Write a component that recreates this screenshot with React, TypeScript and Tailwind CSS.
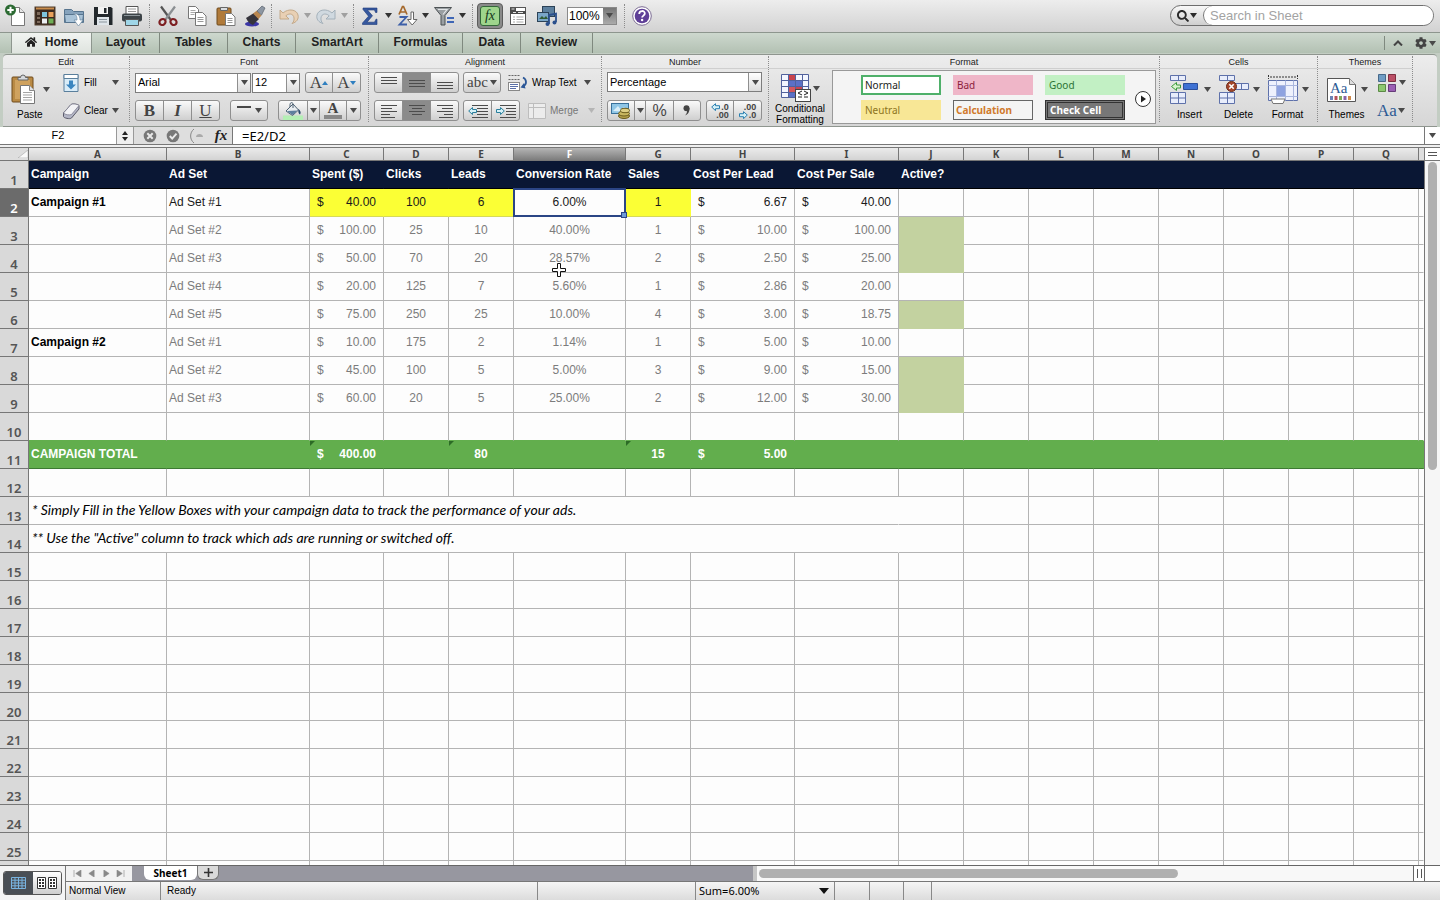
import React from "react";
import clsx from "clsx";
import { FaHome, FaCog, FaSearch } from "react-icons/fa";

/* ---------- small shared pieces ---------- */

function Caret({ className = "text-[#4a4a4a]" }: { className?: string }) {
  return (
    <svg viewBox="0 0 7 5" className={clsx("h-[5px] w-[7px] shrink-0", className)} aria-hidden="true">
      <path d="M0 0h7L3.5 5z" fill="currentColor" />
    </svg>
  );
}

function CaretButton({ label, dim }: { label: string; dim?: boolean }) {
  return (
    <button aria-label={label} className="flex h-5 w-2 shrink-0 items-center justify-center">
      <Caret className={dim ? "text-[#a0a0a0]" : "text-[#333]"} />
    </button>
  );
}

function Dots({ className }: { className?: string }) {
  return <span className={clsx("w-0 shrink-0 border-l border-dotted border-[#8c8c8c]", className)} />;
}

function ToolButton({ label, children }: { label: string; children: React.ReactNode }) {
  return (
    <button aria-label={label} className="flex h-7 w-[29px] shrink-0 items-center justify-center">
      <svg viewBox="0 0 24 24" className="h-6 w-6" fill="none" aria-hidden="true">
        {children}
      </svg>
    </button>
  );
}

const page = (
  <>
    <path d="M7.500 3.500h8l5 5v13h-13z" fill="#fff" stroke="#777" />
    <path d="M15.500 3.500v5h5" fill="#e6e6e6" stroke="#777" />
  </>
);

/* ---------- top toolbar ---------- */

function Toolbar() {
  return (
    <div className="flex h-8 shrink-0 items-center bg-linear-to-b from-[#ededed] to-[#d2d2d2] pb-px pl-px">
      <ToolButton label="New">
        {page}
        <circle cx="6.500" cy="6" r="5.500" fill="#2c6b33" />
        <path d="M6.500 2.800v6.400M3.300 6h6.400" stroke="#fff" strokeWidth="2" />
      </ToolButton>
      <ToolButton label="Templates">
        <rect x="2" y="3" width="20" height="18" fill="#3a2a20" stroke="#55402f" />
        <path d="M3 4.500h18" stroke="#c98c4c" strokeWidth="2" />
        <path d="M4 8h3v3H4zM4 13h3v2H4zM4 17h3v2H4z" fill="#7d6a5b" />
        <path d="M9 8h5v5H9z" fill="#7cc4de" />
        <path d="M15.500 8h5v5h-5z" fill="#e9a15b" />
        <path d="M9 14.500h5v5H9z" fill="#eceff2" />
        <path d="M15.500 14.500h5v5h-5z" fill="#6fae55" />
      </ToolButton>
      <ToolButton label="Open">
        <path d="M2.500 5.500h7l2 2h10v11h-19z" fill="#86a3bd" stroke="#57748e" />
        <path d="M2.500 10.500h19l-1 8h-17z" fill="#a9c3d8" stroke="#57748e" />
        <path d="M11 10c3 0 4 2 4 6h-3l4.500 6 4.500-6h-3c0-5-3-7-7-6z" fill="#fff" stroke="#6f8ba3" strokeWidth=".7" />
      </ToolButton>
      <ToolButton label="Save">
        <path d="M3 3h17l1.500 1.500V21H3z" fill="#23282c" />
        <path d="M7 3h10v7H7z" fill="#f3f3f3" />
        <path d="M13 4h2.500v5H13z" fill="#23282c" />
        <path d="M6 13h12v8H6z" fill="#dfe5ea" />
        <path d="M8 15.500h8M8 18h8" stroke="#8a949c" />
      </ToolButton>
      <ToolButton label="Print">
        <path d="M6 2.500h12v8H6z" fill="#fff" stroke="#555" />
        <path d="M8 5h8M8 7.500h8" stroke="#999" />
        <rect x="2" y="9.500" width="20" height="8" rx="2" fill="#3c4347" />
        <path d="M4 11.500h16" stroke="#8b9499" />
        <path d="M5.500 15.500h13v6h-13z" fill="#9fd6e8" stroke="#555" />
      </ToolButton>
      <Dots className="mx-[3px] h-6" />
      <ToolButton label="Cut">
        <path d="M5 2.500l9.500 13" stroke="#555" strokeWidth="2.200" />
        <path d="M19 2.500l-9.500 13" stroke="#8b8f92" strokeWidth="2.200" />
        <ellipse cx="6.500" cy="18" rx="3.200" ry="2.800" transform="rotate(-35 6.500 18)" stroke="#7d1f22" strokeWidth="2.200" />
        <ellipse cx="17.500" cy="18" rx="3.200" ry="2.800" transform="rotate(35 17.500 18)" stroke="#7d1f22" strokeWidth="2.200" />
      </ToolButton>
      <ToolButton label="Copy">
        <path d="M3.500 2.500h7l3 3v9h-10z" fill="#fff" stroke="#777" />
        <path d="M5.500 6.500h5M5.500 8.500h6M5.500 10.500h4" stroke="#aaa" />
        <path d="M10.500 8.500h7l3.500 3.500v9.500H10.500z" fill="#fff" stroke="#777" />
        <path d="M12.500 13.500h6M12.500 15.500h6M12.500 17.500h6" stroke="#999" />
      </ToolButton>
      <ToolButton label="Paste">
        <rect x="3" y="4" width="14" height="17" rx="1" fill="#b07a3a" stroke="#6f4a1c" />
        <path d="M6.500 3.500h7v3h-7z" fill="#d9dcde" stroke="#666" />
        <path d="M11.500 9.500h6l3.500 3.500v8.500h-9.500z" fill="#fff" stroke="#777" />
        <path d="M13.500 14.500h5M13.500 16.500h5M13.500 18.500h5" stroke="#999" />
      </ToolButton>
      <ToolButton label="Format painter">
        <ellipse cx="9" cy="20" rx="7" ry="2.500" fill="#3b35a5" />
        <path d="M3 14l8-5 5 6-6 6c-3-1-5-3-7-7z" fill="#35343c" />
        <path d="M10 9.500l4-3 4.500 5-3 3.500z" fill="#b98750" />
        <path d="M14 7l5-5 3 2-3.500 7z" fill="#8d97a3" stroke="#59626c" strokeWidth=".7" />
      </ToolButton>
      <Dots className="mx-[2px] h-6" />
      <ToolButton label="Undo">
        <path d="M3 6v9h9l-3.200-3.200c4-3.600 9-1.600 8.200 4.200-.2 1.600-1 2.700-2 3.500 4.500-1.200 7-4.500 6-8.500C19.800 5.500 11.500 4 6 9z" fill="#e9d0b4" stroke="#bfa583" strokeWidth=".9" />
      </ToolButton>
      <CaretButton label="Undo list" dim />
      <ToolButton label="Redo">
        <path d="M21 6v9h-9l3.200-3.200c-4-3.600-9-1.600-8.200 4.200.2 1.600 1 2.700 2 3.500-4.500-1.200-7-4.500-6-8.500C4.200 5.500 12.500 4 18 9z" fill="#d0d9e0" stroke="#9eabb5" strokeWidth=".9" />
      </ToolButton>
      <CaretButton label="Redo list" dim />
      <Dots className="mr-px ml-[5px] h-6" />
      <ToolButton label="AutoSum">
        <path d="M5 4h14v4.500h-1.500L16.500 6H9.500l5 5.800-5.500 6.400h7.500l1.500-3H19V20.500H4.500V19l6-6.800L5 5.500z" fill="#36589f" stroke="#1f3b78" strokeWidth=".6" />
      </ToolButton>
      <CaretButton label="AutoSum list" />
      <ToolButton label="Sort">
        <path d="M4 10.500L7.500 2.500h1L12 10.500M5.500 8h5" stroke="#a5692c" strokeWidth="1.700" />
        <path d="M4.500 13h7l-7 7.500h7.500" stroke="#3c5fa8" strokeWidth="1.800" />
        <path d="M16 8h2.500v7.500H22L17.200 21 12.500 15.500H16z" fill="#fff" stroke="#666" />
      </ToolButton>
      <CaretButton label="Sort list" />
      <ToolButton label="Filter">
        <path d="M2.500 3.500h17l-6.500 8v9.500h-4v-9.500z" fill="#9a9fa2" stroke="#4d5255" />
        <path d="M6 5.500h9l-4 5" stroke="#e3e6e8" strokeWidth="1.200" />
        <path d="M15 14h7M15 18h7" stroke="#3f66b5" strokeWidth="2" />
      </ToolButton>
      <CaretButton label="Filter list" />
      <Dots className="mr-1 ml-[6px] h-6" />
      <button
        aria-label="Formula builder"
        className="flex h-[26px] w-[26px] shrink-0 items-center justify-center rounded-[4px] border border-[#5c5c5c] bg-[#8a8a8a]"
      >
        <span className="flex h-5 w-5 items-center justify-center rounded-[3px] border border-[#34683a] bg-[#9ed58c] font-['Liberation_Serif',serif] text-[14px] leading-none text-[#14361a] italic">
          fx
        </span>
      </button>
      <ToolButton label="Toolbox">
        <rect x="4.500" y="3.500" width="15" height="17" fill="#fff" stroke="#555" />
        <path d="M4 4h6v3h10v3H4z" fill="#4b4b4b" />
        <path d="M5.500 5h3M7 8.500h3M12 8.500h5" stroke="#e5e5e5" />
        <path d="M7 13h2M10.500 13h7M7 15.500h2M10.500 15.500h7M7 18h2M10.500 18h7" stroke="#aaa" />
      </ToolButton>
      <ToolButton label="Media browser">
        <rect x="7.500" y="2.500" width="12" height="10" fill="#5c7f9e" stroke="#2c4257" />
        <rect x="2.500" y="8.500" width="11" height="9" fill="#7aa6c8" stroke="#2c4257" />
        <path d="M4 15l3-3 2 2 2-2 2 3z" fill="#315c35" />
        <path d="M14 20v-9l7-1.500V18" stroke="#2a4f8c" strokeWidth="1.800" />
        <circle cx="12.500" cy="20" r="2" fill="#2a4f8c" />
        <circle cx="19.500" cy="18.500" r="2" fill="#2a4f8c" />
      </ToolButton>
      <div className="relative ml-[6px] shrink-0">
        <select
          aria-label="Zoom"
          defaultValue="100%"
          className="block h-[18px] w-[50px] appearance-none border border-[#8a8a8a] bg-white pl-px text-[12px] leading-none"
        >
          <option>100%</option>
        </select>
        <span className="pointer-events-none absolute inset-y-px right-px flex w-[13px] items-center justify-center bg-linear-to-b from-[#777] to-[#ababab]">
          <Caret />
        </span>
      </div>
      <Dots className="mr-[4px] ml-[7px] h-6" />
      <button aria-label="Help" className="flex h-7 w-[25px] items-center justify-center">
        <svg viewBox="0 0 20 20" className="h-5 w-5" aria-hidden="true">
          <circle cx="10" cy="10" r="9.300" fill="#fff" stroke="#7b6b93" />
          <circle cx="10" cy="10" r="7.300" fill="#5f3f97" />
          <path d="M7.200 8c0-4 5.800-3.800 5.600-.4 0 2-2.700 2-2.700 4" fill="none" stroke="#fff" strokeWidth="1.800" />
          <circle cx="10.100" cy="14" r="1.200" fill="#fff" />
        </svg>
      </button>
      <div className="mr-[6px] ml-auto flex h-[21px] w-[264px] items-center rounded-full border border-[#6e6e6e] bg-linear-to-b from-[#f8f8f8] to-[#cfcfcf]">
        <button aria-label="Search options" className="flex w-8 items-center justify-center gap-px text-[#2b2b2b]">
          <FaSearch className="h-3 w-3" />
          <Caret className="text-[#2b2b2b]" />
        </button>
        <input
          aria-label="Search in Sheet"
          placeholder="Search in Sheet"
          className="h-full min-w-0 flex-1 rounded-full border-l border-[#777] bg-white pl-[6px] text-[13px] placeholder:text-[#a3a3a3]"
        />
      </div>
    </div>
  );
}

/* ---------- ribbon tabs ---------- */

const tabs = [
  { name: "Layout", width: "w-[68px]" },
  { name: "Tables", width: "w-[68px]" },
  { name: "Charts", width: "w-[68px]" },
  { name: "SmartArt", width: "w-[83px]" },
  { name: "Formulas", width: "w-[84px]" },
  { name: "Data", width: "w-[58px]" },
  { name: "Review", width: "w-[72px]" },
];

function Tabs() {
  return (
    <nav className="flex h-[21px] shrink-0 items-stretch border-t border-[#8d968e] bg-linear-to-b from-[#cdd8ce] to-[#b3c1b3] pl-[11px] text-[12px] leading-4 font-bold text-[#222]">
      <button className="flex w-[81px] items-center justify-center gap-2 border-x border-[#8d968e] bg-linear-to-b from-[#f1f4f1] to-[#dfe4df] pb-[2px]">
        <FaHome className="h-3 w-3" />
        Home
      </button>
      {tabs.map((t) => (
        <button key={t.name} className={clsx("border-r border-[#7f897f] pb-[2px]", t.width)}>
          {t.name}
        </button>
      ))}
      <div className="my-[3px] ml-auto flex items-center border-l border-[#7f897f] pr-1 pl-2 text-[#444]">
        <button aria-label="Collapse ribbon" className="mr-[6px] flex w-4 justify-start">
          <svg viewBox="0 0 10 6" className="h-[6px] w-[10px]" aria-hidden="true">
            <path d="M1 5.500L5 1.500l4 4" fill="none" stroke="currentColor" strokeWidth="2" />
          </svg>
        </button>
        <button aria-label="Ribbon settings" className="flex items-center gap-[2px]">
          <FaCog className="h-3 w-3" />
          <Caret />
        </button>
      </div>
    </nav>
  );
}

/* ---------- ribbon ---------- */

function Group({ title, className, children }: { title: string; className: string; children: React.ReactNode }) {
  return (
    <section className={clsx("flex shrink-0 flex-col border-r border-dotted border-[#8c8c8c]", className)}>
      <h2 className="mb-[3px] h-[13px] border-b border-[#cfcfcf] text-center text-[9px] leading-3 text-[#1a1a1a]">{title}</h2>
      {children}
    </section>
  );
}

const strip =
  "flex h-[21px] shrink-0 items-stretch divide-x divide-[#8f8f8f] overflow-hidden rounded-[3px] border border-[#8f8f8f] bg-linear-to-b from-[#fafafa] to-[#cfcfcf] text-[#444]";

function Btn({ label, className, children }: { label: string; className: string; children: React.ReactNode }) {
  return (
    <button aria-label={label} className={clsx("flex items-center justify-center", className)}>
      {children}
    </button>
  );
}

function Lines({ d }: { d: string }) {
  return (
    <svg viewBox="0 0 18 16" className="h-4 w-[18px]" aria-hidden="true">
      <path d={d} stroke="#4c4c4c" fill="none" />
    </svg>
  );
}

function Picker({ label, value, className }: { label: string; value: string; className: string }) {
  return (
    <div className={clsx("relative shrink-0", className)}>
      <select
        aria-label={label}
        defaultValue={value}
        className="block h-5 w-full appearance-none border border-[#7d7d7d] bg-white pl-[2px] text-[11px] leading-none"
      >
        <option>{value}</option>
      </select>
      <span className="pointer-events-none absolute inset-y-px right-px flex w-[13px] items-center justify-center border-l border-[#8f8f8f] bg-linear-to-b from-white to-[#dcdcdc]">
        <Caret />
      </span>
    </div>
  );
}

function EditGroup() {
  return (
    <Group title="Edit" className="w-[127px]">
      <div className="flex pl-2">
        <div className="flex w-12 flex-col">
          <button className="flex flex-col items-start text-[10px]">
            <span className="flex items-center gap-[6px]">
              <svg viewBox="0 0 26 34" className="h-[34px] w-[26px]" aria-hidden="true">
                <rect x="1" y="5" width="21" height="25" rx="1" fill="#b98a45" stroke="#6f4a1c" />
                <rect x="4" y="8" width="15" height="19" fill="#cfa25f" />
                <path d="M7 8V5.500h2.500a2.500 2.500 0 0 1 5 0H17V8z" fill="#d6dade" stroke="#666" />
                <path d="M9.500 13.500h9l5 5V31.500h-14z" fill="#fff" stroke="#777" />
                <path d="M18.500 13.500v5h5" fill="#e2e2e2" stroke="#888" />
                <path d="M12 20.500h9M12 23h9M12 25.500h9M12 28h9" stroke="#a5a5a5" />
              </svg>
              <Caret />
            </span>
            <span className="mt-[3px] pl-[6px] leading-3">Paste</span>
          </button>
        </div>
        <div className="flex flex-col gap-[7px] pl-[3px] text-[10px]">
          <button className="flex h-[21px] items-center">
            <svg viewBox="0 0 18 18" className="mr-1 h-[18px] w-[18px]" aria-hidden="true">
              <path d="M2 .5h14v17H2z" fill="#d9ecf8" stroke="#5a7f9c" />
              <path d="M2 .5h14v4H2z" fill="#fff" stroke="#5a7f9c" />
              <path d="M7 6.500h4v4h3L9 15.500 4 10.500h3z" fill="#3b86c0" />
            </svg>
            <span className="w-7 text-left">Fill</span>
            <Caret />
          </button>
          <button className="flex h-[21px] items-center">
            <svg viewBox="0 0 18 18" className="mr-1 h-[18px] w-[18px]" aria-hidden="true">
              <path d="M1.500 11L9 2.500c1-1 7-.5 8 1v3.500L9.500 16c-1.500 1.500-8 0-8-1.500z" fill="#b4b6c6" stroke="#5b5b6b" />
              <path d="M1.500 11L9 2.500c1-1 7-.5 8 1L9.500 12.500c-2 .8-6.500.3-8-1.500z" fill="#f3f3f6" stroke="#77778a" strokeWidth=".7" />
            </svg>
            <span className="w-7 text-left">Clear</span>
            <Caret />
          </button>
        </div>
      </div>
    </Group>
  );
}

const serif = "font-['Liberation_Serif',serif]";

function FontGroup() {
  return (
    <Group title="Font" className="w-[239px]">
      <div className="flex flex-col gap-[7px] pl-[5px]">
        <div className="flex items-center">
          <Picker label="Font name" value="Arial" className="mr-px w-[116px]" />
          <Picker label="Font size" value="12" className="mr-[5px] w-12" />
          <div className={clsx(strip, serif)}>
            <Btn label="Grow font" className="w-[27px] text-[17px] leading-none">
              A<svg viewBox="0 0 6 4" className="h-1 w-[6px]" aria-hidden="true"><path d="M0 4l3-4 3 4z" fill="#2f7fc0" /></svg>
            </Btn>
            <Btn label="Shrink font" className="w-[27px] text-[17px] leading-none">
              A<svg viewBox="0 0 6 4" className="h-1 w-[6px]" aria-hidden="true"><path d="M0 0l3 4 3-4z" fill="#2f7fc0" /></svg>
            </Btn>
          </div>
        </div>
        <div className="flex items-center">
          <div className={clsx(strip, serif, "mr-[10px] text-[17px] leading-none")}>
            <Btn label="Bold" className="w-7 font-bold">B</Btn>
            <Btn label="Italic" className="w-7 font-bold italic">I</Btn>
            <Btn label="Underline" className="w-[27px] underline">U</Btn>
          </div>
          <div className={clsx(strip, "mr-[10px]")}>
            <Btn label="Borders" className="w-9 gap-1">
              <svg viewBox="0 0 14 10" className="h-[10px] w-[14px]" aria-hidden="true"><path d="M0 1h14" stroke="#111" strokeWidth="1.500" /></svg>
              <Caret />
            </Btn>
          </div>
          <div className={strip}>
            <Btn label="Fill color" className="w-[29px]">
              <svg viewBox="0 0 20 18" className="h-[18px] w-5" aria-hidden="true">
                <path d="M0 13.500h20v4.500H0z" fill="#b4efb4" />
                <path d="M3 9l7-7 5.500 6-6 5.500z" fill="#e9edf0" stroke="#4d6173" />
                <path d="M4 9l10.500-.5-5 4.500z" fill="#5d7f9e" />
                <path d="M10 6V1.500C9 0 7 .5 7 2.500V5" fill="none" stroke="#4d6173" />
                <path d="M15.500 7c2.500 2 2.500 4 1.500 5.500-1.500-.5-2-3-1.500-5.500z" fill="#27496a" />
              </svg>
            </Btn>
            <Btn label="Fill color list" className="w-3"><Caret /></Btn>
            <Btn label="Font color" className={clsx("w-[27px] flex-col text-[15px] leading-[13px] font-bold", serif)}>
              A<span className="h-1 w-[18px] bg-[#888]" />
            </Btn>
            <Btn label="Font color list" className="w-[13px]"><Caret /></Btn>
          </div>
        </div>
      </div>
    </Group>
  );
}

function AlignmentGroup() {
  return (
    <Group title="Alignment" className="w-[233px]">
      <div className="flex flex-col gap-[7px] pl-[5px]">
        <div className="flex items-center">
          <div className={clsx(strip, "mr-1")}>
            <Btn label="Align top" className="w-7"><Lines d="M1 2.500h16M1 5.500h16M1 8.500h16" /></Btn>
            <Btn label="Align middle" className="w-7 bg-[#8b8b8b]"><Lines d="M1 5.500h16M1 8.500h16M1 11.500h16" /></Btn>
            <Btn label="Align bottom" className="w-[27px]"><Lines d="M1 7.500h16M1 10.500h16M1 13.500h16" /></Btn>
          </div>
          <div className={clsx(strip, "mr-[7px]")}>
            <Btn label="Orientation" className={clsx("w-9 gap-[2px] text-[15px] leading-none", serif)}>
              abc <Caret />
            </Btn>
          </div>
          <button className="flex items-center text-[10px]">
            <svg viewBox="0 0 20 18" className="mr-1 h-[18px] w-5" fill="none" aria-hidden="true">
              <path d="M.5 1.500h12M.5 5.500h12" stroke="#666" strokeDasharray="2 1" />
              <rect x=".5" y="8.500" width="11" height="8" fill="#fff" stroke="#888" />
              <path d="M2 10.500h8M2 12.500h8M2 14.500h6" stroke="#5a70a8" />
              <path d="M15 3.500c4 2 4 7 0 9" stroke="#2b5797" strokeWidth="1.800" />
              <path d="M12.500 13.500l3.500-4.500 1.500 5.500z" fill="#2b5797" />
            </svg>
            <span className="mr-[7px]">Wrap Text</span>
            <Caret />
          </button>
        </div>
        <div className="flex items-center">
          <div className={clsx(strip, "mr-1")}>
            <Btn label="Align left" className="w-7"><Lines d="M1 2.500h16M1 5.500h11M1 8.500h16M1 11.500h9M1 14.500h14" /></Btn>
            <Btn label="Align center" className="w-7 bg-[#8b8b8b]"><Lines d="M1 2.500h16M4 5.500h10M1 8.500h16M4 11.500h10" /></Btn>
            <Btn label="Align right" className="w-[27px]"><Lines d="M1 2.500h16M6 5.500h11M1 8.500h16M8 11.500h9M3 14.500h14" /></Btn>
          </div>
          <div className={clsx(strip, "mr-2")}>
            <Btn label="Decrease indent" className="w-7">
              <svg viewBox="0 0 20 16" className="h-4 w-5" aria-hidden="true">
                <path d="M4 2.500h16M9 5.500h11M9 8.500h11M9 11.500h11M4 14.500h16" stroke="#4c4c4c" />
                <path d="M.7 8L4.500 4.500v2h4v3h-4v2z" fill="#d6f1f8" stroke="#2a7f9c" />
              </svg>
            </Btn>
            <Btn label="Increase indent" className="w-[27px]">
              <svg viewBox="0 0 20 16" className="h-4 w-5" aria-hidden="true">
                <path d="M4 2.500h16M10 5.500h10M10 8.500h10M10 11.500h10M4 14.500h16" stroke="#4c4c4c" />
                <path d="M8.300 8L4.500 4.500v2h-4v3h4v2z" fill="#d6f1f8" stroke="#2a7f9c" />
              </svg>
            </Btn>
          </div>
          <button className="flex items-center text-[10px] text-[#777]">
            <svg viewBox="0 0 18 16" className="mr-1 h-4 w-[18px]" aria-hidden="true">
              <path d="M.5.500h17v15H.5zM5.500.500v15M.5 4.500h5M5.500 4.500h12" fill="#ececec" stroke="#bdbdbd" />
            </svg>
            <span className="mr-[10px]">Merge</span>
            <Caret className="text-[#b5b5b5]" />
          </button>
        </div>
      </div>
    </Group>
  );
}

function NumberGroup() {
  return (
    <Group title="Number" className="w-[167px]">
      <div className="flex flex-col gap-2 pl-[5px]">
        <Picker label="Number format" value="Percentage" className="w-[155px]" />
        <div className="flex gap-[5px]">
          <div className={strip}>
            <Btn label="Currency" className="w-[27px]">
              <svg viewBox="0 0 20 17" className="h-[17px] w-5" aria-hidden="true">
                <rect x=".5" y="1.500" width="17" height="10" fill="#8fc6e6" stroke="#39719b" />
                <path d="M2 9l5-5 3 4 3-3 4 5z" fill="#d9eef8" />
                <ellipse cx="13" cy="14" rx="5.500" ry="2.500" fill="#b3a04b" stroke="#6b5c1c" />
                <ellipse cx="13" cy="11.500" rx="5.500" ry="2.500" fill="#c9b760" stroke="#6b5c1c" />
                <ellipse cx="14" cy="8.500" rx="4.500" ry="2.200" fill="#ddcf86" stroke="#6b5c1c" />
              </svg>
            </Btn>
            <Btn label="Currency list" className="w-[11px]"><Caret /></Btn>
            <Btn label="Percent style" className="w-7 text-[16px]">%</Btn>
            <Btn label="Comma style" className="w-[26px]">
              <svg viewBox="0 0 8 11" className="h-[11px] w-2" aria-hidden="true">
                <circle cx="3.500" cy="3.300" r="3" fill="#444" />
                <path d="M6.400 3c.4 4-1.600 6.500-4.400 7.500 1.700-2 2.200-3 2-5z" fill="#444" />
              </svg>
            </Btn>
          </div>
          <div className={clsx(strip, "text-[9px] leading-[8px] font-bold")}>
            <Btn label="Increase decimal" className="w-[27px]">
              <span className="flex flex-col items-end">
                <span className="flex items-center gap-px">
                  <svg viewBox="0 0 9 8" className="h-2 w-[9px]" aria-hidden="true"><path d="M.7 4L4.500.700v2h4v3h-4v2z" fill="#d6f1f8" stroke="#2a7fb0" /></svg>
                  .0
                </span>
                <span>.00</span>
              </span>
            </Btn>
            <Btn label="Decrease decimal" className="w-[27px]">
              <span className="flex flex-col items-end">
                <span>.00</span>
                <span className="flex items-center gap-px">
                  <svg viewBox="0 0 9 8" className="h-2 w-[9px]" aria-hidden="true"><path d="M8.300 4L4.500.700v2h-4v3h4v2z" fill="#d6f1f8" stroke="#2a7fb0" /></svg>
                  .0
                </span>
              </span>
            </Btn>
          </div>
        </div>
      </div>
    </Group>
  );
}

const cellStyles = [
  { name: "Normal", look: "border-2 border-[#4fb06a] bg-white text-[#222]" },
  { name: "Bad", look: "border-2 border-[#efb6c8] bg-[#efb6c8] text-[#8c1c3c]" },
  { name: "Good", look: "border-2 border-[#c2f0c4] bg-[#c2f0c4] text-[#2b7434]" },
  { name: "Neutral", look: "border-2 border-[#f8e796] bg-[#f8e796] text-[#8d7420]" },
  { name: "Calculation", look: "border border-[#666] bg-[#f4f4f4] font-bold text-[#d07a2c]" },
  { name: "Check Cell", look: "border-[3px] border-double border-[#333] bg-[#777] font-bold text-white" },
];

function FormatGroup() {
  return (
    <Group title="Format" className="w-[391px]">
      <div className="-mt-[2px] flex pl-1">
        <button className="mr-[5px] flex w-[54px] flex-col items-center pt-[3px] text-[10px] leading-[11px]">
          <span className="flex items-center gap-px">
            <svg viewBox="0 0 32 30" className="h-[30px] w-8" aria-hidden="true">
              <path d="M1.500 1.500h27v23h-27z" fill="#f3f6ff" />
              <path d="M8 1.500h7v6H8zM15 13h8v6h-8z" fill="#c8434d" />
              <path d="M8 7.500h14v5.500H8z" fill="#5b70c6" />
              <path d="M8 13h7v6H8z" fill="#d3575d" />
              <path d="M8 19h7v5.500H8z" fill="#5b70c6" />
              <path d="M1.500 1.500h27v23h-27zM8.500 1.500v23M15.500 1.500v23M22.500 1.500v23M1.500 7.500h27M1.500 13.500h27M1.500 19.500h27" fill="none" stroke="#51619c" />
              <rect x="15.500" y="16.500" width="15" height="12" fill="#fff" stroke="#444" />
              <path d="M22 18l-4 2 4 2M18 24h4M24 18l4 2-4 2M24 24h4" fill="none" stroke="#222" />
            </svg>
            <Caret />
          </span>
          <span>Conditional Formatting</span>
        </button>
        <div className="flex h-[54px] w-[324px] items-start border border-[#999] bg-[#f4f4f4] pt-1 pl-7">
          <div className="grid flex-1 grid-cols-3 gap-x-3 gap-y-[5px]">
            {cellStyles.map((s) => (
              <button
                key={s.name}
                className={clsx("h-5 pl-[2px] text-left font-['Noto_Sans',sans-serif] text-[10px] leading-[14px]", s.look)}
              >
                {s.name}
              </button>
            ))}
          </div>
          <button aria-label="More styles" className="mr-[3px] ml-[9px] shrink-0 self-center">
            <svg viewBox="0 0 18 18" className="h-[18px] w-[18px]" aria-hidden="true">
              <circle cx="9" cy="9" r="7.500" fill="#fff" stroke="#333" />
              <path d="M7 5.500l5 3.500-5 3.500z" fill="#222" />
            </svg>
          </button>
        </div>
      </div>
    </Group>
  );
}

function BigButton({ label, children }: { label: string; children: React.ReactNode }) {
  return (
    <button className="flex w-[49px] flex-col items-center text-[10px]">
      <span className="flex h-[34px] items-center gap-[3px] self-start pl-1">
        <svg viewBox="0 0 32 30" className="h-[30px] w-8" fill="none" aria-hidden="true">
          {children}
        </svg>
        <Caret />
      </span>
      <span className="mt-[3px] leading-3">{label}</span>
    </button>
  );
}

const cellBlocks = (
  <path
    d="M1.500 1.500h15v5h-15zM9.500 1.500v5M1.500 18.500h15v11h-15zM9.500 18.500v11M1.500 24h15"
    fill="#e8edfb"
    stroke="#5e71aa"
  />
);

function CellsGroup() {
  return (
    <Group title="Cells" className="w-[158px]">
      <div className="flex pl-[5px]">
        <BigButton label="Insert">
          {cellBlocks}
          <path d="M14.500 9.500h14v6h-14z" fill="#3f72d4" stroke="#2b4f9c" />
          <path d="M2.500 12.500l5-4v2.500h4v3h-4v2.500z" fill="#d9f5cf" stroke="#3c9a3c" />
        </BigButton>
        <BigButton label="Delete">
          {cellBlocks}
          <path d="M16.500 9.500h14v6h-14zM23.500 9.500v6" fill="#e8edfb" stroke="#5e71aa" />
          <circle cx="13.500" cy="12.500" r="5" fill="#a5472c" stroke="#6b2a18" />
          <path d="M11.300 10.300l4.400 4.400M15.700 10.300l-4.400 4.400" stroke="#fff" strokeWidth="1.600" />
        </BigButton>
        <BigButton label="Format">
          <path d="M1.500 1v4M30.500 1v4M3 3h26" stroke="#333" strokeDasharray="2 1" />
          <path d="M1.500 6.500h29v20h-29z" fill="#eef1fd" stroke="#5e71aa" />
          <path d="M9.500 6.500v20M18.500 6.500v20M26.500 6.500v20M1.500 11.500h29M1.500 22.500h29" stroke="#a9b6de" />
          <path d="M10 12h8v10h-8z" fill="#8ea2e0" />
          <path d="M4 25h14l-2 4.500H6z" fill="#fff" stroke="#777" />
        </BigButton>
      </div>
    </Group>
  );
}

function ThemesGroup() {
  return (
    <Group title="Themes" className="w-[95px]">
      <div className="flex gap-[6px] pl-1">
        <BigButton label="Themes">
          <path d="M1.500 4.500h22l6 6v17h-28z" fill="#fff" stroke="#555" />
          <path d="M23.500 4.500v6h6" fill="#ddd" stroke="#777" />
          <text x="4" y="19" fontSize="15" fontFamily="Liberation Serif, serif" fill="#2e5a94">Aa</text>
          <path d="M4 22h3v4H4z" fill="#6c83b5" />
          <path d="M8.500 22h3v4h-3z" fill="#b5525a" />
          <path d="M13 22h3v4h-3z" fill="#7fa85a" />
          <path d="M17.500 22h3v4h-3z" fill="#8a63a8" />
          <path d="M22 22h3v4h-3z" fill="#cf8a4c" />
        </BigButton>
        <div className="flex flex-col gap-[7px] text-[#2e5a94]">
          <button aria-label="Theme colors" className="flex h-[21px] items-center gap-[2px]">
            <svg viewBox="0 0 20 20" className="h-5 w-5" aria-hidden="true">
              <path d="M1.500 1.500h7v7h-7z" fill="#6f9cc4" stroke="#47698a" />
              <path d="M11.500 1.500h7v7h-7z" fill="#bb4f66" stroke="#7d2f40" />
              <path d="M1.500 11.500h7v7h-7z" fill="#8cc870" stroke="#5b8a45" />
              <path d="M11.500 11.500h7v7h-7z" fill="#9b5fb4" stroke="#663b79" />
            </svg>
            <Caret />
          </button>
          <button aria-label="Theme fonts" className={clsx("flex h-[21px] items-center gap-px text-[17px] leading-none", serif)}>
            Aa <Caret />
          </button>
        </div>
      </div>
    </Group>
  );
}

function Ribbon() {
  return (
    <div className="shrink-0 overflow-hidden bg-[#c3cdc3] px-[3px] pt-px">
      <div className="flex h-[73px] rounded-t-[4px] border-t border-b border-[#8f968f] bg-linear-to-b from-[#ededed] to-[#d6d6d6] pt-px pb-1">
        <EditGroup />
        <FontGroup />
        <AlignmentGroup />
        <NumberGroup />
        <FormatGroup />
        <CellsGroup />
        <ThemesGroup />
      </div>
    </div>
  );
}

/* ---------- formula bar ---------- */

function FormulaBar() {
  return (
    <div className="flex h-[18px] shrink-0 items-stretch border-b border-[#777] bg-[#dedede]">
      <input aria-label="Name box" defaultValue="F2" className="w-[116px] shrink-0 bg-white text-center text-[11px]" />
      <button aria-label="Names" className="flex w-[18px] flex-col items-center justify-center gap-[3px] border-x border-[#999] bg-[#efefef]">
        <svg viewBox="0 0 6 10" className="h-[10px] w-[6px]" aria-hidden="true">
          <path d="M0 4l3-4 3 4zM0 6l3 4 3-4z" fill="#222" />
        </svg>
      </button>
      <div className="flex w-[99px] shrink-0 items-center justify-around border-r border-[#777] pl-1">
        <button aria-label="Cancel">
          <svg viewBox="0 0 14 14" className="h-[14px] w-[14px]" aria-hidden="true">
            <circle cx="7" cy="7" r="6.300" fill="#777" />
            <path d="M4.300 4.300l5.400 5.400M9.700 4.300L4.300 9.700" stroke="#e8e8e8" strokeWidth="2" />
          </svg>
        </button>
        <button aria-label="Enter">
          <svg viewBox="0 0 14 14" className="h-[14px] w-[14px]" aria-hidden="true">
            <circle cx="7" cy="7" r="6.300" fill="#777" />
            <path d="M3.800 7l2.400 2.600 4.300-5" fill="none" stroke="#e8e8e8" strokeWidth="2" />
          </svg>
        </button>
        <svg viewBox="0 0 16 16" className="h-4 w-4" aria-hidden="true">
          <path d="M5 1C.5 4.500.5 11.500 5 15" fill="none" stroke="#888" />
          <path d="M7 9c0-4 7-4 7 0z" fill="#aaa" />
        </svg>
        <button aria-label="Insert function" className={clsx("text-[15px] leading-none font-bold text-[#222] italic", serif)}>
          fx
        </button>
      </div>
      <input
        aria-label="Formula"
        defaultValue="=E2/D2"
        className="min-w-0 flex-1 bg-white pl-[9px] font-['Noto_Sans',sans-serif] text-[13px] leading-none"
      />
      <button aria-label="Expand formula bar" className="flex w-4 items-center justify-center border-l border-[#777] bg-white">
        <Caret />
      </button>
    </div>
  );
}

/* ---------- sheet ---------- */

const columns = [
  { id: "A", width: "w-[138px]" },
  { id: "B", width: "w-[143px]" },
  { id: "C", width: "w-[74px]" },
  { id: "D", width: "w-[65px]" },
  { id: "E", width: "w-[65px]" },
  { id: "F", width: "w-[112px]" },
  { id: "G", width: "w-[65px]" },
  { id: "H", width: "w-[104px]" },
  { id: "I", width: "w-[104px]" },
  { id: "J", width: "w-[65px]" },
  { id: "K", width: "w-[65px]" },
  { id: "L", width: "w-[65px]" },
  { id: "M", width: "w-[65px]" },
  { id: "N", width: "w-[65px]" },
  { id: "O", width: "w-[65px]" },
  { id: "P", width: "w-[65px]" },
  { id: "Q", width: "w-[65px]" },
];

const sheet: Record<number, string[]> = {
  1: ["Campaign", "Ad Set", "Spent ($)", "Clicks", "Leads", "Conversion Rate", "Sales", "Cost Per Lead", "Cost Per Sale", "Active?"],
  2: ["Campaign #1", "Ad Set #1", "40.00", "100", "6", "6.00%", "1", "6.67", "40.00"],
  3: ["", "Ad Set #2", "100.00", "25", "10", "40.00%", "1", "10.00", "100.00"],
  4: ["", "Ad Set #3", "50.00", "70", "20", "28.57%", "2", "2.50", "25.00"],
  5: ["", "Ad Set #4", "20.00", "125", "7", "5.60%", "1", "2.86", "20.00"],
  6: ["", "Ad Set #5", "75.00", "250", "25", "10.00%", "4", "3.00", "18.75"],
  7: ["Campaign #2", "Ad Set #1", "10.00", "175", "2", "1.14%", "1", "5.00", "10.00"],
  8: ["", "Ad Set #2", "45.00", "100", "5", "5.00%", "3", "9.00", "15.00"],
  9: ["", "Ad Set #3", "60.00", "20", "5", "25.00%", "2", "12.00", "30.00"],
  11: ["CAMPAIGN TOTAL", "", "400.00", "", "80", "", "15", "5.00", ""],
};

const notes: Record<number, string> = {
  13: "* Simply Fill in the Yellow Boxes with your campaign data to track the performance of your ads.",
  14: '** Use the "Active" column to track which ads are running or switched off.',
};

const activeRows = [3, 4, 6, 8, 9];
const rowNumbers = Array.from({ length: 25 }, (_, i) => i + 1);
const isMoney = (c: number) => c === 2 || c === 7 || c === 8;

function cellLook(r: number, c: number) {
  if (r === 1) return "border-b-black border-r-[#0a1734] bg-[#0a1734] font-bold text-white";
  if (r === 11) return "border-b-[#3d7a33] border-r-[#62ae4d] bg-[#62ae4d] font-bold text-white";
  if (c === 9 && activeRows.includes(r)) return "border-r-[#c3d2a0] border-b-[#c3d2a0] bg-[#c3d2a0]";
  const yellow = r === 2 && ((c >= 2 && c <= 4) || c === 6);
  return clsx(
    c === 17 ? "border-r-[#fdfdfd]" : "border-r-[#b4b4b4]",
    r === 10 ? "border-b-[#62ae4d]" : "border-b-[#b4b4b4]",
    yellow ? "border-r-[#fbff35]! border-b-[#d6d95a]! bg-[#fbff35]" : "bg-[#fdfdfd]",
    c === 0 ? "font-bold text-black" : r === 2 ? "text-[#1a1a1a]" : "text-[#7c7c7c]",
  );
}

function Cell({ r, c }: { r: number; c: number }) {
  const value = sheet[r]?.[c] ?? "";
  const money = r > 1 && isMoney(c) && value !== "";
  const centered = r > 1 && c >= 3 && c <= 6;
  const flagged = r === 11 && (c === 2 || c === 4 || c === 6);
  const special = (r === 2 || r === 4) && c === 5;
  return (
    <td
      className={clsx(
        "h-7 border-r border-b p-0 pb-[2px] text-[12px] leading-4 whitespace-nowrap",
        cellLook(r, c),
        money ? "px-[7px]" : centered ? "text-center" : "pl-[2px]",
        (flagged || special) && "relative",
      )}
    >
      {money ? (
        <div className="flex justify-between">
          <span>$</span>
          <span>{value}</span>
        </div>
      ) : (
        value
      )}
      {flagged && (
        <svg viewBox="0 0 5 5" className="absolute top-0 left-0 h-[5px] w-[5px]" aria-hidden="true">
          <path d="M0 0h5L0 5z" fill="#2c6b26" />
        </svg>
      )}
      {r === 2 && c === 5 && (
        <span className="absolute -inset-px border-2 border-[#2b4585]">
          <span className="absolute -right-[3px] -bottom-[3px] h-[6px] w-[6px] border border-[#2b4585] bg-[#6f9bd6]" />
        </span>
      )}
      {r === 4 && c === 5 && (
        <svg viewBox="0 0 15 15" className="absolute top-[18px] left-[38px] z-10 h-[15px] w-[15px]" aria-hidden="true">
          <path d="M5.500.500h3v5h5v3h-5v5h-3v-5h-5v-3h5z" fill="#fff" stroke="#111" />
        </svg>
      )}
    </td>
  );
}

function Sheet() {
  return (
    <div className="flex min-h-0 flex-1 border-t border-[#777]">
      <div className="min-w-0 flex-1 overflow-hidden bg-[#fdfdfd]">
        <table className="w-full table-fixed border-separate border-spacing-0">
          <colgroup>
            <col className="w-[29px]" />
            {columns.map((col) => (
              <col key={col.id} className={col.width} />
            ))}
            <col />
          </colgroup>
          <thead>
            <tr className="font-['Noto_Sans',sans-serif] text-[10px] leading-3 text-[#444]">
              <td className="h-[13px] border-r border-b border-[#777] bg-[#dedede] p-0">
                <svg viewBox="0 0 10 8" className="ml-auto h-2 w-[10px]" aria-hidden="true">
                  <path d="M10 0v8H0z" fill="#fafafa" stroke="#999" strokeWidth=".5" />
                </svg>
              </td>
              {columns.map((col) => (
                <th
                  key={col.id}
                  className={clsx(
                    "h-[13px] border-r border-b border-[#777] p-0 font-bold",
                    col.id === "F"
                      ? "bg-linear-to-b from-[#b5b5b5] to-[#7d7d7d] text-white"
                      : "bg-linear-to-b from-[#ebebeb] to-[#d3d3d3]",
                  )}
                >
                  {col.id}
                </th>
              ))}
              <td className="border-b border-[#777] bg-[#dedede] p-0" />
            </tr>
          </thead>
          <tbody>
            {rowNumbers.map((r) => (
              <tr key={r}>
                <th
                  className={clsx(
                    "h-7 border-r border-b border-[#777] p-0 align-bottom font-['Noto_Sans',sans-serif] text-[13px] leading-4 font-semibold",
                    r === 2 ? "bg-[#6b6b6b] text-white" : "bg-[#d9d9d9] text-[#555]",
                  )}
                >
                  {r}
                </th>
                {notes[r] ? (
                  <td
                    colSpan={9}
                    className="h-7 border-r border-b border-r-[#fdfdfd] border-b-[#b4b4b4] bg-[#fdfdfd] p-0 pb-[2px] pl-[3px] font-['Lato',sans-serif] text-[14px] leading-4 whitespace-nowrap text-black italic"
                  >
                    {notes[r]}
                  </td>
                ) : (
                  columns.slice(0, 9).map((col, c) => <Cell key={col.id} r={r} c={c} />)
                )}
                {columns.slice(9).map((col, c) => (
                  <Cell key={col.id} r={r} c={c + 9} />
                ))}
                <Cell r={r} c={columns.length} />
              </tr>
            ))}
            <tr>
              <th className="h-7 border-r border-[#777] bg-[#d9d9d9] p-0" />
              {columns.map((col) => (
                <td key={col.id} className="border-r border-[#b4b4b4] p-0" />
              ))}
              <td />
            </tr>
          </tbody>
        </table>
      </div>
      <div className="flex w-4 shrink-0 flex-col items-center border-l border-[#777] bg-[#f6f6f6]">
        <div className="flex h-[13px] w-full flex-col items-center justify-center gap-[2px] border-b border-[#777] bg-white">
          <span className="h-px w-[9px] bg-[#555]" />
          <span className="h-px w-[9px] bg-[#555]" />
        </div>
        <div className="mt-px h-[308px] w-[9px] rounded-full bg-[#b0b0b0]" />
      </div>
    </div>
  );
}

/* ---------- bottom bars ---------- */

function Grid9({ color }: { color: string }) {
  return (
    <svg viewBox="0 0 15 12" className="h-3 w-[15px]" aria-hidden="true">
      <path d="M.5.500h14v11H.5zM4 .5v11M7.500.500v11M11 .5v11M.5 3.200h14M.5 6h14M.5 8.800h14" fill="none" stroke={color} />
    </svg>
  );
}

function Footer() {
  return (
    <footer className="flex h-[35px] shrink-0 border-t border-[#666] bg-[#f4f4f4]">
      <div className="flex w-[66px] shrink-0 items-center border-r border-[#777] pl-[3px]">
        <div className="flex h-6 overflow-hidden rounded-[3px] border border-[#555]">
          <button aria-label="Normal view" className="flex w-[29px] items-center justify-center bg-[#4a4f55]">
            <Grid9 color="#79b4e0" />
          </button>
          <button aria-label="Page layout view" className="flex w-[28px] items-center justify-center gap-[2px] bg-linear-to-b from-white to-[#cfcfcf]">
            {[0, 1].map((i) => (
              <svg key={i} viewBox="0 0 9 12" className="h-3 w-[9px]" aria-hidden="true">
                <path d="M.5.500h8v11h-8z" fill="#fff" stroke="#333" />
                <path d="M2 3h2M5 3h2M2 6h2M5 6h2M2 9h2M5 9h2" stroke="#333" strokeWidth="2" />
              </svg>
            ))}
          </button>
        </div>
      </div>
      <div className="flex min-w-0 flex-1 flex-col">
        <div className="flex h-4 shrink-0 border-b border-[#777] bg-[#9797a0]">
          <div className="flex w-[66px] items-center justify-around bg-[#f2f2f2] px-1 text-[#888]">
            {[
              { l: "First sheet", d: "M1 0v8M9 0v8L3 4z" },
              { l: "Previous sheet", d: "M8 0v8L2 4z" },
              { l: "Next sheet", d: "M2 0v8l6-4z" },
              { l: "Last sheet", d: "M9 0v8M1 0v8l6-4z" },
            ].map((b) => (
              <button key={b.l} aria-label={b.l}>
                <svg viewBox="0 0 10 8" className="h-[7px] w-[9px]" aria-hidden="true">
                  <path d={b.d} fill="currentColor" stroke="currentColor" strokeWidth=".7" />
                </svg>
              </button>
            ))}
          </div>
          <button className="ml-3 h-[14px] w-[53px] rounded-b-[6px] bg-white font-['Noto_Sans',sans-serif] text-[10px] leading-[13px] font-bold">
            Sheet1
          </button>
          <button aria-label="Add sheet" className="flex h-[14px] w-[22px] items-center justify-center rounded-b-[6px] border border-t-0 border-[#777] bg-[#dadada]">
            <svg viewBox="0 0 9 9" className="h-[9px] w-[9px]" aria-hidden="true">
              <path d="M4.500 0v9M0 4.500h9" stroke="#333" strokeWidth="1.600" />
            </svg>
          </button>
          <div className="ml-auto flex w-[660px] items-center border-l-4 border-[#c6c6c6] bg-[#f8f8f8]">
            <div className="ml-[2px] h-[9px] w-[419px] rounded-full bg-[#b0b0b0]" />
          </div>
          <div className="flex w-3 items-center justify-center gap-[3px] border-x border-[#666] bg-white">
            <span className="h-[9px] w-px bg-[#555]" />
            <span className="h-[9px] w-px bg-[#555]" />
          </div>
          <div className="w-[15px] bg-white" />
        </div>
        <div className="flex flex-1 items-stretch divide-x divide-[#888] bg-linear-to-b from-[#f5f5f5] to-[#dcdcdc] text-[10px] leading-[18px]">
          <span className="w-[95px] pl-[3px]">Normal View</span>
          <span className="w-[377px] pl-[6px]">Ready</span>
          <span className="w-[158px]" />
          <button className="flex w-[139px] items-center justify-between pr-[5px] pl-[3px] font-['Noto_Sans',sans-serif] text-[11px]">
            Sum=6.00%
            <svg viewBox="0 0 10 6" className="h-[6px] w-[10px]" aria-hidden="true">
              <path d="M0 0h10L5 6z" fill="#111" />
            </svg>
          </button>
          <span className="w-[35px]" />
          <span className="w-[34px]" />
          <span className="w-[28px]" />
          <span className="flex-1" />
        </div>
      </div>
    </footer>
  );
}

export default function App() {
  return (
    <div className="flex h-screen flex-col overflow-hidden bg-[#e8e8e8] font-['Liberation_Sans',Arial,sans-serif] text-black">
      <Toolbar />
      <Tabs />
      <Ribbon />
      <FormulaBar />
      <div className="h-[2px] shrink-0 bg-[#f0f0f0]" />
      <Sheet />
      <Footer />
    </div>
  );
}
